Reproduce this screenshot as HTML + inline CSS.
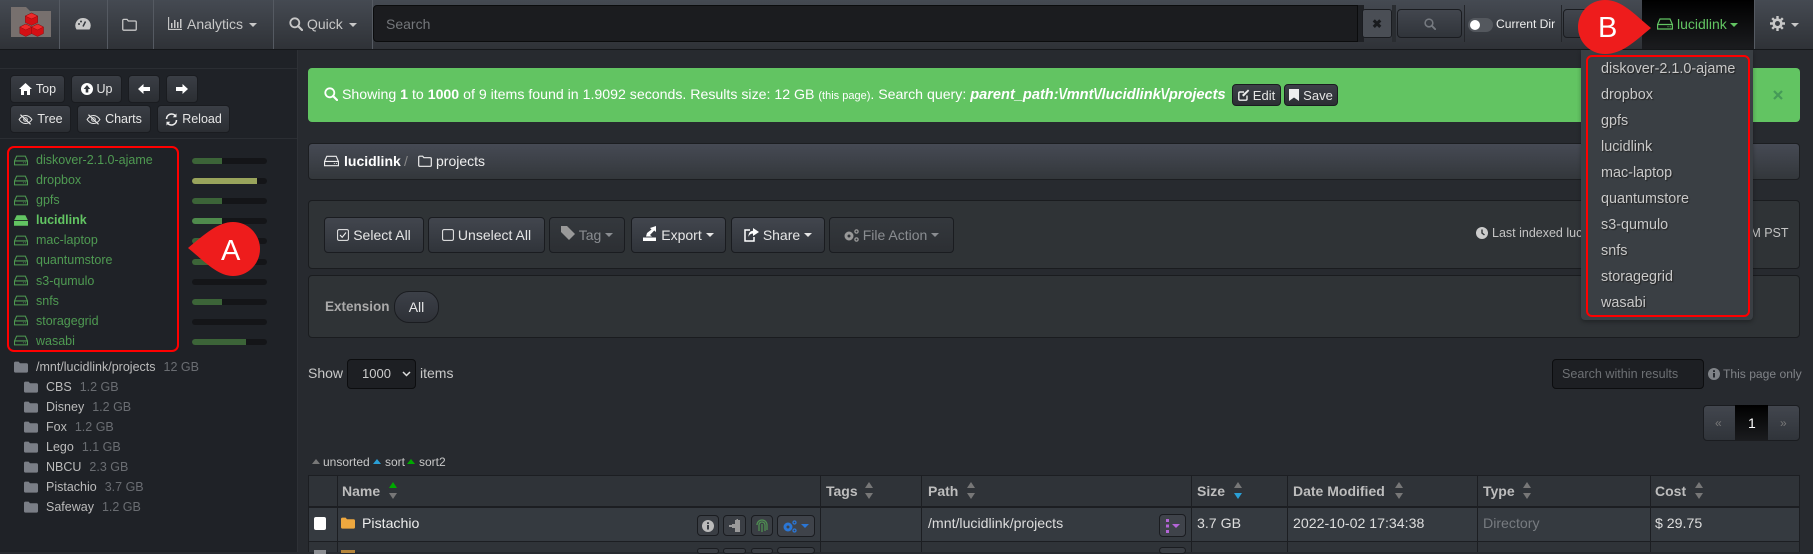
<!DOCTYPE html>
<html><head><meta charset="utf-8"><style>
html,body{margin:0;padding:0}
body{width:1813px;height:552px;overflow:hidden;background:#272a2f;position:relative;font-family:"Liberation Sans",sans-serif;font-size:13px;color:#c8c8c8}
.a,.t,.b{position:absolute}
.t{white-space:nowrap;line-height:20px}
.b{box-sizing:border-box;background:linear-gradient(#42464e,#30343a);border:1px solid #1a1c20;border-radius:4px;color:#e6e6e6;white-space:nowrap;display:flex;align-items:center;justify-content:center;gap:4px}
.nd{position:absolute;top:0;width:1px;height:49px;background:#555a62}
.car{display:inline-block;width:0;height:0;border-left:4px solid transparent;border-right:4px solid transparent;border-top:4px solid currentColor;vertical-align:middle}
svg{display:block;flex:none}
.i{fill:none;stroke:currentColor;stroke-width:1.2}
.bar{position:absolute;left:192px;width:75px;height:6px;border-radius:3px;background:#141518;overflow:hidden}
.bar i{display:block;height:6px;background:#3c6438}
.tc{position:absolute;top:475px;width:1px;height:77px;background:#1c1e22}
.sa{position:absolute;width:0;height:0;border-left:4.500px solid transparent;border-right:4.500px solid transparent}
.up{border-bottom:6px solid #777}.dn{border-top:6px solid #777}
.leg{border-left-width:4px;border-right-width:4px;border-bottom-width:5px}
.dd{position:absolute;left:1601px;line-height:20px;font-size:14.400px;color:#c9c9c9;text-shadow:1px 1px 1px #222}
.g{color:#4f9a52;left:36px;font-size:12.500px}
.sb{height:28px;background:linear-gradient(#3a3e45,#2b2e33);font-size:12.500px}
</style></head><body>
<svg width="0" height="0" style="position:absolute"><defs>
<symbol id="hdd" viewBox="0 0 16 12"><path d="M.6 6.500 3 1h10l2.400 5.500V11H.6zM.6 6.500h14.800" fill="none" stroke="currentColor" stroke-width="1.200"/><path d="M10.500 8.200h1v1h-1zM12.700 8.200h1v1h-1z" fill="currentColor"/></symbol>
<symbol id="fo" viewBox="0 0 14 12"><path d="M.7 2.200c0-.6.400-1 1-1h3l1.200 1.500h6.400c.6 0 1 .4 1 1v6.600c0 .6-.4 1-1 1H1.700c-.6 0-1-.4-1-1z" fill="none" stroke="currentColor" stroke-width="1.200"/></symbol>
<symbol id="ff" viewBox="0 0 14 12"><path d="M0 2c0-.8.600-1.400 1.400-1.400h3.200l1.400 1.700h6.600c.8 0 1.400.6 1.400 1.400v6.500c0 .8-.6 1.400-1.400 1.400H1.400C.6 11.600 0 11 0 10.200z" fill="currentColor"/></symbol>
<symbol id="se" viewBox="0 0 14 14"><circle cx="5.800" cy="5.800" r="4.500" fill="none" stroke="currentColor" stroke-width="1.800"/><path d="M9 9l4 4" stroke="currentColor" stroke-width="2.200" stroke-linecap="round"/></symbol>
<symbol id="es" viewBox="0 0 16 12"><path d="M1 6c2-3 4.300-4.400 7-4.400S13 3 15 6c-2 3-4.300 4.400-7 4.400S3 9 1 6z" fill="none" stroke="currentColor" stroke-width="1.100"/><path d="M2.500.8 13.500 11.200" stroke="currentColor" stroke-width="1.300"/><circle cx="8" cy="6" r="2" fill="none" stroke="currentColor"/></symbol>
</defs></svg>

<!-- sidebar -->
<div class="a" style="left:0;top:49px;width:297px;height:503px;background:#1f2227;border-right:1px solid #2e3136"></div>
<div class="a" style="left:0;top:68px;width:297px;height:1px;background:#2b2e33"></div>
<div class="a" style="left:0;top:138px;width:297px;height:1px;background:#2b2e33"></div>

<!-- nav -->
<div class="a" style="left:0;top:0;width:1813px;height:49px;background:linear-gradient(#454a52,#2f3237);border-bottom:1px solid #15171a;box-sizing:content-box"></div>
<svg class="a" style="left:11px;top:7px" width="40" height="30" viewBox="0 0 40 30"><path d="M0 0h15l4 4h21v26H0z" fill="#77706e"/><g stroke="#7c0508" stroke-width=".4"><path d="M20.500 6l6.200 3v6.500l-6.200 3-6.200-3V9z" fill="#d40f14"/><path d="M20.500 6l6.200 3-6.200 3-6.200-3z" fill="#ee2a2a"/><path d="M14.800 17l6 3v6.500l-6 3-6-3V20z" fill="#d40f14"/><path d="M14.800 17l6 3-6 3-6-3z" fill="#ee2a2a"/><path d="M26.500 17l6 3v6.500l-6 3-6-3V20z" fill="#d40f14"/><path d="M26.500 17l6 3-6 3-6-3z" fill="#ee2a2a"/></g></svg>
<div class="nd" style="left:59px"></div><div class="nd" style="left:107px"></div><div class="nd" style="left:153px"></div><div class="nd" style="left:273px"></div><div class="nd" style="left:372px"></div>
<svg class="a" style="left:75px;top:17px;color:#c8c8c8" width="16" height="14" viewBox="0 0 16 14"><path d="M8 1a7.500 7.500 0 0 0-6.500 11.500h13A7.500 7.500 0 0 0 8 1z" fill="#c8c8c8"/><path d="M8 9.500l2.500-5" stroke="#33373c" stroke-width="1.500"/><circle cx="4" cy="7" r="1" fill="#33373c"/><circle cx="6" cy="4.500" r="1" fill="#33373c"/></svg>
<svg class="a" style="left:122px;top:18px;color:#c8c8c8" width="15" height="13"><use href="#fo"/></svg>
<svg class="a" style="left:168px;top:17px;color:#c8c8c8" width="14" height="13" viewBox="0 0 14 13"><path d="M.6 0v12.400H14" fill="none" stroke="currentColor" stroke-width="1.100"/><path d="M3 6h1.500v5H3zM6 3h1.500v8H6zM9 5h1.500v6H9zM12 2h1.500v9H12z" fill="currentColor"/></svg>
<div class="t" style="left:187px;top:14px;font-size:14px;color:#c8c8c8">Analytics</div><span class="car a" style="left:249px;top:23px;color:#c8c8c8"></span>
<svg class="a" style="left:289px;top:17px;color:#c8c8c8" width="14" height="14"><use href="#se"/></svg>
<div class="t" style="left:307px;top:14px;font-size:14px;color:#c8c8c8">Quick</div><span class="car a" style="left:349px;top:23px;color:#c8c8c8"></span>
<div class="a" style="left:373px;top:5px;width:985px;height:37px;box-sizing:border-box;background:#1b1c1f;border:1px solid #0b0c0d;border-radius:4px 0 0 4px"></div>
<div class="t" style="left:386px;top:14px;font-size:14px;color:#74777b">Search</div>
<div class="a" style="left:1358px;top:5px;width:6px;height:37px;background:#1f2125"></div>
<div class="b" style="left:1362px;top:9px;width:30px;height:29px;background:#4a4e55;border-radius:3px;font-size:12px;font-weight:bold;color:#191b1e">✖</div>
<div class="a" style="left:1392px;top:5px;width:4px;height:37px;background:#2a2d31"></div>
<div class="b" style="left:1397px;top:9px;width:65px;height:29px"><svg width="12" height="12" style="color:#767a80"><use href="#se"/></svg></div>
<div class="a" style="left:1464px;top:5px;width:1px;height:37px;background:#24262a"></div>
<div class="a" style="left:1468px;top:18px;width:25px;height:14px;border-radius:7px;background:#54585e"></div>
<div class="a" style="left:1470px;top:20px;width:10px;height:10px;border-radius:5px;background:#fff"></div>
<div class="t" style="left:1496px;top:14px;font-size:12.100px;color:#eee">Current Dir</div>
<div class="a" style="left:1561px;top:5px;width:1px;height:37px;background:#24262a"></div>
<div class="b" style="left:1563px;top:9px;width:60px;height:29px"></div>
<div class="a" style="left:1642px;top:0;width:112px;height:49px;background:linear-gradient(#000,#1b1c1f)"></div>
<div class="a" style="left:1754px;top:0;width:1px;height:49px;background:#555a62"></div>
<svg class="a" style="left:1657px;top:18px;color:#62c462" width="16" height="12"><use href="#hdd"/></svg>
<div class="t" style="left:1677px;top:14px;font-size:14px;color:#62c462">lucidlink</div><span class="car a" style="left:1730px;top:23px;color:#62c462"></span>
<svg class="a" style="left:1770px;top:16px" width="15" height="15" viewBox="0 0 15 15"><circle cx="7.500" cy="7.500" r="3.800" fill="none" stroke="#c8c8c8" stroke-width="2.600"/><path d="M7.500 0v15M0 7.500h15M2.200 2.200l10.600 10.600M12.800 2.200 2.200 12.800" stroke="#c8c8c8" stroke-width="2.400" stroke-dasharray="2.600 9.800"/></svg>
<span class="car a" style="left:1791px;top:23px;color:#c8c8c8"></span>

<!-- sidebar buttons -->
<div class="b sb" style="left:10px;top:75px;width:55px"><svg width="13" height="12" viewBox="0 0 13 12"><path d="M6.500 0 13 6h-2v6H8V8H5v4H2V6H0z" fill="#fff"/></svg>Top</div>
<div class="b sb" style="left:71px;top:75px;width:51px"><svg width="12" height="12" viewBox="0 0 12 12"><circle cx="6" cy="6" r="6" fill="#fff"/><path d="M6 2 9.300 6H7.300v3.500H4.700V6H2.700z" fill="#33373c"/></svg>Up</div>
<div class="b sb" style="left:128px;top:75px;width:32px"><svg width="12" height="10" viewBox="0 0 12 10"><path d="M5.500 0v3H12v4H5.500v3L0 5z" fill="#fff"/></svg></div>
<div class="b sb" style="left:166px;top:75px;width:32px"><svg width="12" height="10" viewBox="0 0 12 10"><path d="M6.500 0v3H0v4h6.500v3L12 5z" fill="#fff"/></svg></div>
<div class="b sb" style="left:10px;top:105px;width:61px"><svg width="15" height="11"><use href="#es"/></svg>Tree</div>
<div class="b sb" style="left:77px;top:105px;width:74px"><svg width="15" height="11"><use href="#es"/></svg>Charts</div>
<div class="b sb" style="left:157px;top:105px;width:73px"><svg width="13" height="13" viewBox="0 0 13 13"><path d="M1.500 6A5 5 0 0 1 10.500 3M11.500 7A5 5 0 0 1 2.500 10" fill="none" stroke="#eee" stroke-width="1.600"/><path d="M11.500.5v3.800H7.700zM1.500 12.500V8.700h3.800z" fill="#eee"/></svg>Reload</div>

<!-- sidebar list -->
<div class="a" style="left:7px;top:146px;width:172px;height:206px;box-sizing:border-box;border:2px solid #f00;border-radius:7px"></div>
<style>.h{position:absolute;left:14px;width:14px;height:11px;color:#4f9a52}</style>
<svg class="h" style="top:155px"><use href="#hdd"/></svg><div class="t g" style="top:150px">diskover-2.1.0-ajame</div><div class="bar" style="top:158px"><i style="width:30px"></i></div>
<svg class="h" style="top:175px"><use href="#hdd"/></svg><div class="t g" style="top:170px">dropbox</div><div class="bar" style="top:178px"><i style="width:65px;background:#99a45c"></i></div>
<svg class="h" style="top:195px"><use href="#hdd"/></svg><div class="t g" style="top:190px">gpfs</div><div class="bar" style="top:198px"><i style="width:30px"></i></div>
<svg class="a" style="left:14px;top:215px;color:#62c462" width="14" height="11" viewBox="0 0 16 12"><path d="M3 0h10l2.800 5.500H.2zM0 6.500h16V12H0z" fill="currentColor"/></svg><div class="t g" style="top:210px;color:#62c462;font-weight:bold">lucidlink</div><div class="bar" style="top:218px"><i style="width:30px;background:#4f8a4c"></i></div>
<svg class="h" style="top:235px"><use href="#hdd"/></svg><div class="t g" style="top:230px">mac-laptop</div><div class="bar" style="top:238px"><i style="width:30px"></i></div>
<svg class="h" style="top:255px"><use href="#hdd"/></svg><div class="t g" style="top:250px">quantumstore</div><div class="bar" style="top:259px"><i style="width:30px"></i></div>
<svg class="h" style="top:275px"><use href="#hdd"/></svg><div class="t g" style="top:271px">s3-qumulo</div><div class="bar" style="top:279px"></div>
<svg class="h" style="top:295px"><use href="#hdd"/></svg><div class="t g" style="top:291px">snfs</div><div class="bar" style="top:299px"><i style="width:30px"></i></div>
<svg class="h" style="top:315px"><use href="#hdd"/></svg><div class="t g" style="top:311px">storagegrid</div><div class="bar" style="top:319px"></div>
<svg class="h" style="top:335px"><use href="#hdd"/></svg><div class="t g" style="top:331px">wasabi</div><div class="bar" style="top:339px"><i style="width:54px"></i></div>

<!-- tree -->
<style>.f{position:absolute;width:14px;height:12px;color:#7a7e86}.z{color:#6a6d72;margin-left:8px}.r{font-size:12.500px;color:#bbb}</style>
<svg class="f" style="left:14px;top:361px"><use href="#ff"/></svg><div class="t r" style="left:36px;top:357px">/mnt/lucidlink/projects<span class="z">12 GB</span></div>
<svg class="f" style="left:24px;top:381px"><use href="#ff"/></svg><div class="t r" style="left:46px;top:377px">CBS<span class="z">1.2 GB</span></div>
<svg class="f" style="left:24px;top:401px"><use href="#ff"/></svg><div class="t r" style="left:46px;top:397px">Disney<span class="z">1.2 GB</span></div>
<svg class="f" style="left:24px;top:421px"><use href="#ff"/></svg><div class="t r" style="left:46px;top:417px">Fox<span class="z">1.2 GB</span></div>
<svg class="f" style="left:24px;top:441px"><use href="#ff"/></svg><div class="t r" style="left:46px;top:437px">Lego<span class="z">1.1 GB</span></div>
<svg class="f" style="left:24px;top:461px"><use href="#ff"/></svg><div class="t r" style="left:46px;top:457px">NBCU<span class="z">2.3 GB</span></div>
<svg class="f" style="left:24px;top:481px"><use href="#ff"/></svg><div class="t r" style="left:46px;top:477px">Pistachio<span class="z">3.7 GB</span></div>
<svg class="f" style="left:24px;top:501px"><use href="#ff"/></svg><div class="t r" style="left:46px;top:497px">Safeway<span class="z">1.2 GB</span></div>

<!-- alert -->
<div class="a" style="left:308px;top:68px;width:1492px;height:54px;background:#62c462;border-radius:4px"></div>
<svg class="a" style="left:324px;top:87px;color:#fff" width="14" height="14"><use href="#se"/></svg>
<div class="t" style="left:342px;top:84px;color:#fff;font-size:14.150px">Showing <b>1</b> to <b>1000</b> of 9 items found in 1.9092 seconds. Results size: 12 GB <small style="font-size:11px">(this page)</small>. Search query: <b style="font-size:14.600px"><i>parent_path:\/mnt\/lucidlink\/projects</i></b></div>
<div class="b" style="left:1232px;top:84px;width:49px;height:22px;background:linear-gradient(#3c4048,#2c2f34);gap:3px"><svg width="12" height="12" viewBox="0 0 12 12"><path d="M9 6.500V10a1.200 1.200 0 0 1-1.200 1.200H2A1.200 1.200 0 0 1 .8 10V4.200A1.200 1.200 0 0 1 2 3h4" fill="none" stroke="#eee" stroke-width="1.400"/><path d="M4 6l6-5.500 1.300 1.300L5.600 7.600z" fill="#eee"/></svg>Edit</div>
<div class="b" style="left:1284px;top:84px;width:54px;height:22px;background:linear-gradient(#3c4048,#2c2f34);gap:4px"><svg width="10" height="12" viewBox="0 0 10 12"><path d="M0 0h10v12L5 8.500 0 12z" fill="#eee"/></svg>Save</div>
<svg class="a" style="left:1773px;top:90px" width="10" height="10" viewBox="0 0 10 10"><path d="M1 1l8 8M9 1 1 9" stroke="#459a58" stroke-width="2.200"/></svg>

<!-- breadcrumb -->
<div class="a" style="left:308px;top:143px;width:1492px;height:37px;box-sizing:border-box;background:linear-gradient(#464a54,#33373b);border:1px solid #1c1e21;border-radius:4px"></div>
<svg class="a" style="left:324px;top:155px;color:#eee" width="15" height="12"><use href="#hdd"/></svg>
<div class="t" style="left:344px;top:151px;color:#fff;font-weight:bold;font-size:14px">lucidlink</div>
<div class="t" style="left:404px;top:151px;color:#888;font-size:14px">/</div>
<svg class="a" style="left:418px;top:155px;color:#eee" width="14" height="12"><use href="#fo"/></svg>
<div class="t" style="left:436px;top:151px;color:#eee;font-size:14px">projects</div>

<!-- toolbar -->
<div class="a" style="left:308px;top:200px;width:1492px;height:69px;box-sizing:border-box;background:#2f3336;border:1px solid #1a1c1f;border-radius:4px"></div>
<div class="b" style="left:324px;top:217px;width:100px;height:36px;font-size:14px"><svg width="12" height="12" viewBox="0 0 12 12"><rect x=".6" y=".6" width="10.800" height="10.800" rx="1.500" fill="none" stroke="#eee"/><path d="M3 6l2.200 2.300L9 3.500" fill="none" stroke="#eee" stroke-width="1.100"/></svg>Select All</div>
<div class="b" style="left:428px;top:217px;width:117px;height:36px;font-size:14px"><svg width="12" height="12" viewBox="0 0 12 12"><rect x=".6" y=".6" width="10.800" height="10.800" rx="1.500" fill="none" stroke="#eee"/></svg>Unselect All</div>
<div class="b" style="left:549px;top:217px;width:76px;height:36px;font-size:14px;color:#8a8d91;background:linear-gradient(#34383d,#2c2f33)"><svg width="14" height="14" viewBox="0 0 14 14" style="margin-top:-4px"><path d="M0 0h6l8 8-6 6-8-8z" fill="#999"/></svg>Tag <span class="car"></span></div>
<div class="b" style="left:631px;top:217px;width:95px;height:36px;font-size:14px"><svg width="14" height="15" viewBox="0 0 14 15" style="margin-top:-3px"><path d="M0 11.500h13V15H0zM3 10.500 4 7l4.500-3.500L7 2l6-2v6l-1.800-1.500L7 9 9 10.500z" fill="#fff"/></svg>Export <span class="car"></span></div>
<div class="b" style="left:731px;top:217px;width:94px;height:36px;font-size:14px"><svg width="15" height="14" viewBox="0 0 15 14"><path d="M6 2H1v11h9V9" fill="none" stroke="#fff" stroke-width="1.500"/><path d="M9 0l6 4-6 4V5.500C6.500 5.500 5 7 4.500 9 4.300 5 6 3 9 2.700z" fill="#fff"/></svg>Share <span class="car"></span></div>
<div class="b" style="left:829px;top:217px;width:125px;height:36px;font-size:14px;color:#8a8d91;background:linear-gradient(#34383d,#2c2f33)"><svg width="15" height="13" viewBox="0 0 15 13"><circle cx="5" cy="7" r="3" fill="none" stroke="#999" stroke-width="3" /><circle cx="12.500" cy="2.500" r="1.600" fill="none" stroke="#999" stroke-width="1.300"/><circle cx="12.500" cy="10.500" r="1.600" fill="none" stroke="#999" stroke-width="1.300"/></svg>File Action <span class="car"></span></div>
<svg class="a" style="left:1476px;top:227px" width="12" height="12" viewBox="0 0 12 12"><circle cx="6" cy="6" r="6" fill="#ccc"/><path d="M6 2.500V6l2.500 2" fill="none" stroke="#2f3336" stroke-width="1.400"/></svg>
<div class="t" style="left:1492px;top:223px;font-size:12.500px;color:#c4c4c4">Last indexed lucidlink</div>
<div class="t" style="left:1742px;top:223px;font-size:12.500px;color:#c4c4c4">PM PST</div>

<!-- extension -->
<div class="a" style="left:308px;top:275px;width:1492px;height:63px;box-sizing:border-box;background:#2f3336;border:1px solid #1a1c1f;border-radius:4px"></div>
<div class="t" style="left:325px;top:297px;font-weight:bold;color:#aaa;font-size:13.500px">Extension</div>
<div class="b" style="left:394px;top:291px;width:45px;height:32px;border-radius:15px;font-size:14px;background:linear-gradient(#3c4048,#2e3137)">All</div>

<!-- show -->
<div class="t" style="left:308px;top:363px;font-size:14px;color:#c8c8c8">Show</div>
<div class="a" style="left:347px;top:359px;width:69px;height:30px;box-sizing:border-box;background:#1d1f23;border:1px solid #0c0d0f;border-radius:4px"></div>
<div class="t" style="left:362px;top:364px;font-size:13px;color:#ccc">1000</div>
<svg class="a" style="left:402px;top:371px" width="9" height="6" viewBox="0 0 9 6"><path d="M1 1l3.500 3.500L8 1" fill="none" stroke="#ddd" stroke-width="1.500"/></svg>
<div class="t" style="left:420px;top:363px;font-size:14px;color:#c8c8c8">items</div>
<div class="a" style="left:1552px;top:359px;width:152px;height:30px;box-sizing:border-box;background:#1d1f23;border:1px solid #0c0d0f;border-radius:4px"></div>
<div class="t" style="left:1562px;top:364px;font-size:12.600px;color:#6d7074">Search within results</div>
<svg class="a" style="left:1708px;top:368px" width="12" height="12" viewBox="0 0 12 12"><circle cx="6" cy="6" r="6" fill="#808388"/><path d="M5 5h2v4.500H5zM5 2.300h2v1.700H5z" fill="#272a2f"/></svg>
<div class="t" style="left:1723px;top:364px;font-size:12.100px;color:#808388">This page only</div>

<!-- pagination -->
<div class="a" style="left:1703px;top:405px;width:97px;height:36px;box-sizing:border-box;background:linear-gradient(#42464e,#30343a);border:1px solid #1a1c20;border-radius:4px"></div>
<div class="a" style="left:1735px;top:405px;width:33px;height:36px;background:linear-gradient(#000,#1b1c1f)"></div>
<div class="t" style="left:1715px;top:413px;font-size:12px;color:#777">«</div>
<div class="t" style="left:1748px;top:413px;font-size:14px;color:#fff">1</div>
<div class="t" style="left:1780px;top:413px;font-size:12px;color:#777">»</div>

<!-- legend -->
<div class="sa up leg" style="left:312px;top:459px"></div><div class="t" style="left:323px;top:452px;font-size:12px;color:#c8c8c8">unsorted</div>
<div class="sa up leg" style="left:373px;top:459px;border-bottom-color:#2a9fd6"></div><div class="t" style="left:385px;top:452px;font-size:12px;color:#c8c8c8">sort</div>
<div class="sa up leg" style="left:407px;top:459px;border-bottom-color:#0a0"></div><div class="t" style="left:419px;top:452px;font-size:12px;color:#c8c8c8">sort2</div>

<!-- table -->
<div class="a" style="left:308px;top:475px;width:1492px;height:31px;background:#2f3338;border-top:1px solid #1c1e22;box-sizing:border-box"></div>
<div class="a" style="left:308px;top:506px;width:1492px;height:2px;background:#1c1e22"></div>
<div class="a" style="left:308px;top:508px;width:1492px;height:33px;background:#353a40"></div>
<div class="a" style="left:308px;top:541px;width:1492px;height:1px;background:#1c1e22"></div>
<div class="a" style="left:308px;top:542px;width:1492px;height:10px;background:#2f3338"></div>
<div class="tc" style="left:308px"></div><div class="tc" style="left:337px"></div><div class="tc" style="left:820px"></div><div class="tc" style="left:921px"></div><div class="tc" style="left:1191px"></div><div class="tc" style="left:1287px"></div><div class="tc" style="left:1477px"></div><div class="tc" style="left:1650px"></div><div class="tc" style="left:1799px"></div>
<style>.th{font-weight:bold;font-size:14px;color:#bdbdbd;top:481px}.td{font-size:14.150px;color:#ddd;top:513px}</style>
<div class="t th" style="left:342px">Name</div><div class="sa up" style="left:389px;top:482px;border-bottom-color:#0a0"></div><div class="sa dn" style="left:389px;top:493px"></div>
<div class="t th" style="left:826px">Tags</div><div class="sa up" style="left:865px;top:482px"></div><div class="sa dn" style="left:865px;top:493px"></div>
<div class="t th" style="left:928px">Path</div><div class="sa up" style="left:967px;top:482px"></div><div class="sa dn" style="left:967px;top:493px"></div>
<div class="t th" style="left:1197px">Size</div><div class="sa up" style="left:1234px;top:482px"></div><div class="sa dn" style="left:1234px;top:493px;border-top-color:#2a9fd6"></div>
<div class="t th" style="left:1293px">Date Modified</div><div class="sa up" style="left:1395px;top:482px"></div><div class="sa dn" style="left:1395px;top:493px"></div>
<div class="t th" style="left:1483px">Type</div><div class="sa up" style="left:1523px;top:482px"></div><div class="sa dn" style="left:1523px;top:493px"></div>
<div class="t th" style="left:1655px">Cost</div><div class="sa up" style="left:1695px;top:482px"></div><div class="sa dn" style="left:1695px;top:493px"></div>

<div class="a" style="left:314px;top:517px;width:12px;height:13px;background:#fff;border-radius:2px"></div>
<svg class="a" style="left:341px;top:517px;color:#eea83f" width="14" height="12"><use href="#ff"/></svg>
<div class="t td" style="left:362px;color:#eee">Pistachio</div>
<div class="b" style="left:697px;top:515px;width:22px;height:21px;background:#3a3e44"><svg width="12" height="12" viewBox="0 0 12 12"><circle cx="6" cy="6" r="6" fill="#bbb"/><path d="M5 5h2v4.500H5zM5 2.300h2v1.700H5z" fill="#3a3e44"/></svg></div>
<div class="b" style="left:723px;top:515px;width:23px;height:21px;background:#3a3e44"><svg width="12" height="13" viewBox="0 0 12 13"><path d="M6 1h1.500V0h1.500v1h2v12H6V9H3V8H0V6h3V5h3z" fill="#9a9a9a"/></svg></div>
<div class="b" style="left:751px;top:515px;width:22px;height:21px;background:#3a3e44"><svg width="12" height="13" viewBox="0 0 12 13"><path d="M1 6a5 5 0 0 1 10 0v5M3 12V6a3 3 0 0 1 6 0v6M6 5v8" fill="none" stroke="#4f8f52" stroke-width="1.300"/></svg></div>
<div class="b" style="left:777px;top:515px;width:38px;height:22px;background:#3f434a;color:#2a76d6"><svg width="14" height="13" viewBox="0 0 14 13"><circle cx="5" cy="7" r="3" fill="none" stroke="#2a76d6" stroke-width="3"/><circle cx="11.500" cy="2.500" r="1.500" fill="none" stroke="#2a76d6" stroke-width="1.300"/><circle cx="11.500" cy="10.500" r="1.500" fill="none" stroke="#2a76d6" stroke-width="1.300"/></svg><span class="car"></span></div>
<div class="t td" style="left:928px">/mnt/lucidlink/projects</div>
<div class="b" style="left:1159px;top:514px;width:27px;height:23px;background:#3f434a;color:#b565d8;gap:3px"><svg width="3" height="14" viewBox="0 0 3 14"><path d="M0 0h3v3H0zM0 5.500h3v3H0zM0 11h3v3H0z" fill="#b565d8"/></svg><span class="car"></span></div>
<div class="t td" style="left:1197px">3.7 GB</div>
<div class="t td" style="left:1293px">2022-10-02 17:34:38</div>
<div class="t td" style="left:1483px;color:#777b80">Directory</div>
<div class="t td" style="left:1655px">$ 29.75</div>
<div class="a" style="left:697px;top:548px;width:22px;height:6px;background:#3a3e44;border:1px solid #1a1c20;border-radius:4px;box-sizing:border-box"></div>
<div class="a" style="left:723px;top:548px;width:23px;height:6px;background:#3a3e44;border:1px solid #1a1c20;border-radius:4px;box-sizing:border-box"></div>
<div class="a" style="left:751px;top:548px;width:22px;height:6px;background:#3a3e44;border:1px solid #1a1c20;border-radius:4px;box-sizing:border-box"></div>
<div class="a" style="left:777px;top:547px;width:38px;height:7px;background:#3a3e44;border:1px solid #1a1c20;border-radius:4px;box-sizing:border-box"></div>
<div class="a" style="left:1159px;top:547px;width:27px;height:7px;background:#3a3e44;border:1px solid #1a1c20;border-radius:4px;box-sizing:border-box"></div>
<div class="a" style="left:314px;top:550px;width:12px;height:4px;background:#8a8c90"></div>
<div class="a" style="left:341px;top:550px;width:14px;height:3px;background:#b5853a"></div>

<!-- dropdown -->
<div class="a" style="left:1581px;top:50px;width:172px;height:270px;background:#3a3f44;border-radius:0 0 4px 4px;box-shadow:0 2px 4px rgba(0,0,0,.3)"></div>
<div class="a" style="left:1586px;top:55px;width:164px;height:262px;box-sizing:border-box;border:2px solid #f00;border-radius:6px"></div>
<div class="dd" style="top:59px">diskover-2.1.0-ajame</div>
<div class="dd" style="top:85px">dropbox</div>
<div class="dd" style="top:111px">gpfs</div>
<div class="dd" style="top:137px">lucidlink</div>
<div class="dd" style="top:163px">mac-laptop</div>
<div class="dd" style="top:189px">quantumstore</div>
<div class="dd" style="top:215px">s3-qumulo</div>
<div class="dd" style="top:241px">snfs</div>
<div class="dd" style="top:267px">storagegrid</div>
<div class="dd" style="top:293px">wasabi</div>

<!-- markers -->
<svg class="a" style="left:180px;top:215px" width="90" height="70" viewBox="0 0 90 70"><path d="M8 33C25 19 38 7 53 7a27 27 0 0 1 0 54C38 61 25 47 8 33z" fill="#ee1c1c"/></svg>
<div class="t" style="left:221px;top:231px;font-size:29px;line-height:40px;color:#fff">A</div>
<svg class="a" style="left:1570px;top:0" width="90" height="60" viewBox="0 0 90 60"><path d="M81 28C64 14 52 0 35 0a27 27 0 0 0 0 54C52 54 64 42 81 28z" fill="#ee1c1c"/></svg>
<div class="t" style="left:1598px;top:8px;font-size:29px;line-height:40px;color:#fff">B</div>
</body></html>
